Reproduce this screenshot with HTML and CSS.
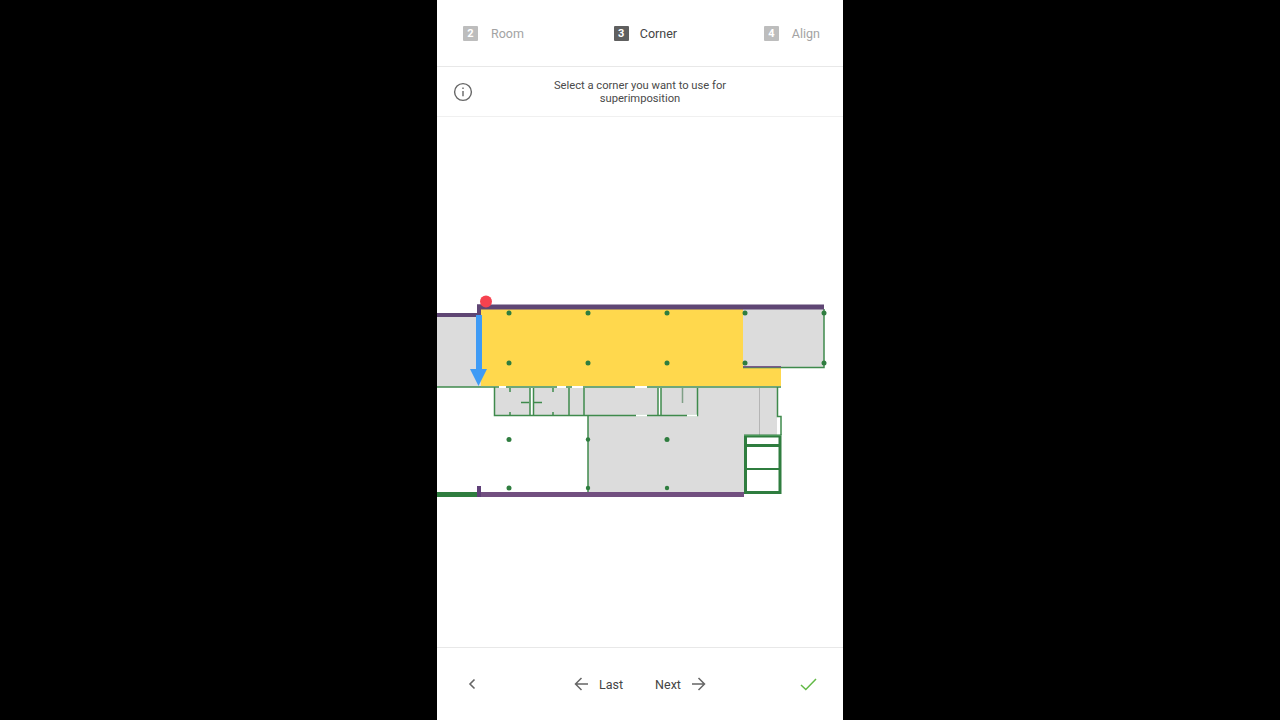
FILE: index.html
```html
<!DOCTYPE html>
<html lang="en">
<head>
    <meta charset="UTF-8">
    <meta name="viewport" content="width=device-width, initial-scale=1.0">
    <title>Corner</title>
    <link rel="stylesheet" href="styles.css">
</head>
<body>
    <div class="phone">
        <div class="steps">
            <div class="step"><span class="step-num">2</span><span>Room</span></div>
            <div class="step active"><span class="step-num">3</span><span>Corner</span></div>
            <div class="step"><span class="step-num">4</span><span>Align</span></div>
        </div>

        <div class="hint">
            <svg class="info-icon" width="20" height="20" viewBox="0 0 20 20" fill="none" stroke="#666" stroke-width="1.4">
                <circle cx="10" cy="10" r="8.4"/>
                <path d="M10 9v5.2"/>
                <path d="M10 5.6v1.5"/>
            </svg>
            <p class="hint-text">Select a corner you want to use for superimposition</p>
        </div>

        <div class="canvas">
            <!-- viewBox uses screen coordinates so the plan is easy to check against the shot -->
            <svg class="plan" width="406" height="530" viewBox="437 117 406 530">
                <!-- floors -->
                <g fill="#dcdcdc">
                    <rect x="437" y="316" width="44" height="71"/>
                    <rect x="743" y="309" width="81" height="58"/>
                    <rect x="495" y="388" width="282" height="27"/>
                    <rect x="588" y="415" width="156" height="77"/>
                    <rect x="744" y="415" width="33" height="20"/>
                </g>
                <rect x="481" y="309" width="262" height="77" fill="#ffd84d"/>
                <rect x="743" y="368" width="38" height="18" fill="#ffd84d"/>

                <!-- gaps between double walls -->
                <g fill="#fff">
                    <rect x="530" y="388" width="3.500" height="27"/>
                    <rect x="658" y="388" width="3" height="27"/>
                    <rect x="777" y="418" width="3" height="17"/>
                </g>

                <!-- green walls -->
                <g fill="none" stroke="#3f8a4c" stroke-width="1.5">
                    <path d="M437 387H781"/>
                    <path d="M824 309V367.500H743"/>
                    <path d="M494.500 387V415.500H660"/>
                    <path d="M588 415V492"/>
                    <path d="M530 388V415M533.500 388V415M569 388V415M584 388V415"/>
                    <path d="M658 388V415M661 388V415"/>
                    <path d="M660 415.500H697.500V388"/>
                    <path d="M777.500 387V416.500H781V435"/>
                    <path d="M521 402.500H529M534 402.500H542"/>
                    <path d="M510 388V392M510 412V415M553 388V392M553 412V415"/>
                </g>
                <path d="M682.500 388V403" stroke="#7f9f86" stroke-width="1.500"/>
                <path d="M759.500 388V435" stroke="#b5b5b5"/>

                <!-- door gaps -->
                <g stroke="#fff" stroke-width="2">
                    <path d="M499 387H506M557 387H566M572 387H583M635 387H647"/>
                    <path d="M636 415.500H647M687 415.500H697"/>
                </g>

                <!-- stair box -->
                <rect x="745.500" y="436" width="34.500" height="56.500" fill="#fff" stroke="#2f7d3f" stroke-width="3"/>
                <path d="M744 435.500H781" stroke="#4b9a5a" stroke-width="1"/>
                <path d="M746 445.500H780" stroke="#2f7d3f" stroke-width="3"/>
                <path d="M746 469H780" stroke="#2f7d3f" stroke-width="2"/>

                <!-- purple walls -->
                <g fill="#5f4674">
                    <rect x="477" y="304.500" width="347" height="5"/>
                    <rect x="437" y="313" width="44" height="4"/>
                    <rect x="477" y="304.500" width="4" height="12"/>
                </g>
                <rect x="743" y="366" width="38" height="1.500" fill="#7a5a8a"/>
                <rect x="437" y="492" width="42" height="5" fill="#2f7d3f"/>
                <rect x="479" y="492" width="265" height="5" fill="#724f80"/>
                <rect x="477" y="486" width="4" height="11" fill="#5f3f78"/>

                <!-- corner points -->
                <g fill="#2f7d3f">
                    <circle cx="509" cy="313" r="2.500"/>
                    <circle cx="588" cy="313" r="2.500"/>
                    <circle cx="667" cy="313" r="2.500"/>
                    <circle cx="745" cy="313" r="2.500"/>
                    <circle cx="824" cy="313" r="2.500"/>
                    <circle cx="509" cy="363" r="2.500"/>
                    <circle cx="588" cy="363" r="2.500"/>
                    <circle cx="667" cy="363" r="2.500"/>
                    <circle cx="745" cy="363" r="2.500"/>
                    <circle cx="824" cy="363" r="2.500"/>
                    <circle cx="509" cy="439.500" r="2.500"/>
                    <circle cx="588" cy="439.500" r="2.200"/>
                    <circle cx="667" cy="439.500" r="2.500"/>
                    <circle cx="509" cy="488" r="2.500"/>
                    <circle cx="588" cy="488" r="2.200"/>
                    <circle cx="667" cy="488" r="2.200"/>
                </g>

                <!-- selected corner and direction -->
                <path d="M476 315H482V369H487L478.500 386L470 369H476Z" fill="#3f9bf5"/>
                <circle cx="486" cy="301.500" r="6" fill="#f6424f"/>
            </svg>
        </div>

        <div class="footer">
            <svg class="back" width="8" height="12" viewBox="0 0 8 12" fill="none" stroke="#666" stroke-width="1.6">
                <path d="M6.500 1.500L2 6L6.500 10.500"/>
            </svg>
            <div class="nav">
                <div class="nav-btn">
                    <svg width="14" height="14" viewBox="0 0 14 14" fill="none" stroke="#666" stroke-width="1.5">
                        <path d="M14 7H1.500M7.500 1L1.500 7L7.500 13"/>
                    </svg>
                    <span>Last</span>
                </div>
                <div class="nav-btn">
                    <span>Next</span>
                    <svg width="14" height="14" viewBox="0 0 14 14" fill="none" stroke="#666" stroke-width="1.5">
                        <path d="M0 7H12.500M6.500 1L12.500 7L6.500 13"/>
                    </svg>
                </div>
            </div>
            <svg class="done" width="17" height="13" viewBox="0 0 17 13" fill="none" stroke="#62b946" stroke-width="1.5">
                <path d="M1 7L5.800 11.500L16 1"/>
            </svg>
        </div>
    </div>
</body>
</html>
```

FILE: styles.css
```css
body {
    margin: 0;
    height: 100vh;
    background-color: #000;
    display: flex;
    justify-content: center;
    font-family: Roboto, Arial, sans-serif;
    overflow: hidden;
}

.phone {
    width: 406px;
    height: 720px;
    background-color: #fff;
    display: flex;
    flex-direction: column;
}

.steps {
    height: 66px;
    flex-shrink: 0;
    padding: 0 23px 0 26px;
    display: flex;
    justify-content: space-between;
    align-items: center;
    border-bottom: 1px solid #e8e8e8;
}

.step {
    display: flex;
    align-items: center;
    gap: 13px;
    font-size: 12.5px;
    color: #a3a3a3;
}

.step-num {
    width: 15px;
    height: 15px;
    border-radius: 1px;
    background-color: #bdbdbd;
    color: #fff;
    font-size: 11px;
    font-weight: 700;
    line-height: 15px;
    text-align: center;
}

.step.active {
    margin-left: 3px;
    color: #444;
}

.step.active .step-num {
    background-color: #5f5f5f;
    margin-right: -2px;
}

.hint {
    height: 49px;
    flex-shrink: 0;
    padding: 0 15px 0 15.5px;
    display: flex;
    align-items: center;
    border-bottom: 1px solid #f0f0f0;
}

.info-icon {
    flex-shrink: 0;
}

.hint-text {
    flex: 1;
    margin: 0;
    padding: 0 85px 0 64.5px;
    font-size: 11.2px;
    line-height: 13px;
    color: #4a4a4a;
    text-align: center;
}

.canvas {
    flex: 1;
    min-height: 0;
}

.plan {
    display: block;
}

.footer {
    height: 72px;
    flex-shrink: 0;
    padding: 0 26px;
    display: grid;
    grid-template-columns: 1fr auto 1fr;
    align-items: center;
    border-top: 1px solid #e8e8e8;
}

.back {
    margin-left: 5px;
}

.done {
    justify-self: end;
}

.nav {
    display: flex;
    gap: 32px;
}

.nav-btn {
    display: flex;
    align-items: center;
    gap: 11px;
    font-size: 12.5px;
    color: #444;
}
```
